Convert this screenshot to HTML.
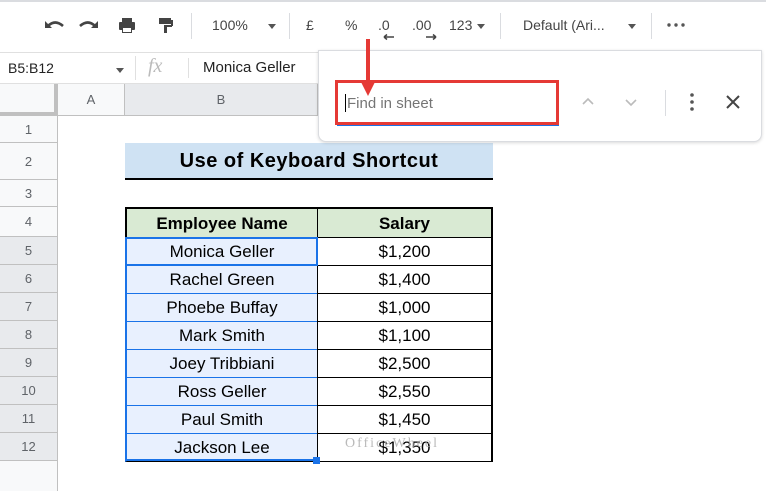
<html><head><style>
*{margin:0;padding:0;box-sizing:border-box}
body{width:766px;height:484px;overflow:hidden;background:#fff;font-family:"Liberation Sans",Arial,sans-serif;position:relative;color:#000}
.a{position:absolute}
.tb{color:#444;font-size:14px}
.rh{position:absolute;left:0;width:58px;background:#f8f9fa;border-bottom:1px solid #c0c0c0;border-right:1px solid #c0c0c0;color:#5f6368;font-size:13px;text-align:center}
.rh.s{background:#e8eaed}
.c{position:absolute;font-size:17px;text-align:center;border:1px solid #000}
</style></head><body>
<div class="a" style="left:0;top:0;width:766px;height:2px;background:#dadce0"></div>
<!-- toolbar -->
<svg class="a" style="top:14px;left:42px" width="160" height="22" viewBox="0 0 160 22">
<path d="M6 12 Q13 5 21 12" stroke="#444" stroke-width="2.6" fill="none"/><path d="M3 7 L3 14 L10 14Z" fill="#444"/>
<path d="M53 12 Q46 5 38 12" stroke="#444" stroke-width="2.6" fill="none"/><path d="M56 7 L56 14 L49 14Z" fill="#444"/>
<rect x="80" y="4" width="10" height="4" fill="#444"/><rect x="77" y="8" width="16" height="8" rx="1" fill="#444"/><rect x="80" y="13" width="10" height="6" fill="#444"/><rect x="81" y="14" width="8" height="4" fill="#fff"/>
<rect x="117" y="4" width="12" height="6" fill="#444"/><rect x="129" y="6" width="2" height="6" fill="#444"/><rect x="122" y="11" width="8" height="2" fill="#444"/><rect x="122" y="12" width="3" height="7" fill="#444"/>
</svg>
<div class="a" style="left:191px;top:13px;width:1px;height:26px;background:#dadce0"></div>
<div class="a tb" style="left:212px;top:17px">100%</div>
<div class="a" style="left:268px;top:24px;border:4px solid transparent;border-top:5px solid #555"></div>
<div class="a" style="left:289px;top:13px;width:1px;height:26px;background:#dadce0"></div>
<div class="a tb" style="left:306px;top:17px">£</div>
<div class="a tb" style="left:345px;top:17px">%</div>
<div class="a tb" style="left:378px;top:17px">.0</div>
<svg class="a" style="left:380px;top:33px" width="60" height="8"><path d="M4 4 H14 M4 4 L7 1.5 M4 4 L7 6.5" stroke="#444" stroke-width="1.5" fill="none"/><path d="M426 0" /><path d="M46 4 H56 M56 4 L53 1.5 M56 4 L53 6.5" stroke="#444" stroke-width="1.5" fill="none"/></svg>
<div class="a tb" style="left:412px;top:17px">.00</div>
<div class="a tb" style="left:449px;top:17px">123</div>
<div class="a" style="left:477px;top:24px;border:4px solid transparent;border-top:5px solid #555"></div>
<div class="a" style="left:500px;top:13px;width:1px;height:26px;background:#dadce0"></div>
<div class="a tb" style="left:523px;top:17px">Default (Ari...</div>
<div class="a" style="left:628px;top:24px;border:4px solid transparent;border-top:5px solid #555"></div>
<div class="a" style="left:651px;top:13px;width:1px;height:26px;background:#dadce0"></div>
<svg class="a" style="left:666px;top:22px" width="20" height="6"><circle cx="3" cy="3" r="1.7" fill="#555"/><circle cx="10" cy="3" r="1.7" fill="#555"/><circle cx="17" cy="3" r="1.7" fill="#555"/></svg>
<!-- formula bar -->
<div class="a" style="left:0;top:52px;width:318px;height:32px;border-top:1px solid #e0e0e0;border-bottom:1px solid #e0e0e0"></div>
<div class="a" style="left:8px;top:60px;font-size:14px;color:#222">B5:B12</div>
<div class="a" style="left:116px;top:68px;border:4px solid transparent;border-top:5px solid #555"></div>
<div class="a" style="left:135px;top:56px;width:1px;height:24px;background:#e0e0e0"></div>
<div class="a" style="left:148px;top:55px;font-size:20px;color:#bbb;font-style:italic;font-family:'Liberation Serif',serif">fx</div>
<div class="a" style="left:188px;top:58px;width:1px;height:20px;background:#e0e0e0"></div>
<div class="a" style="left:203px;top:59px;font-size:15px;color:#222">Monica Geller</div>
<!-- column headers -->
<div class="a" style="left:0;top:84px;width:58px;height:32px;background:#f8f9fa;border-right:4px solid #c0c0c0;border-bottom:4px solid #c0c0c0"></div>
<div class="a" style="left:58px;top:84px;width:67px;height:32px;background:#f8f9fa;border-right:1px solid #c0c0c0;border-bottom:1px solid #c0c0c0;font-size:13px;color:#5f6368;text-align:center;line-height:31px">A</div>
<div class="a" style="left:125px;top:84px;width:193px;height:32px;background:#e8eaed;border-right:1px solid #c0c0c0;border-bottom:1px solid #c0c0c0;font-size:13px;color:#5f6368;text-align:center;line-height:31px">B</div>
<!-- row headers -->
<div class="rh" style="top:116px;height:27px;line-height:27px">1</div>
<div class="rh" style="top:143px;height:37px;line-height:37px">2</div>
<div class="rh" style="top:180px;height:27px;line-height:27px">3</div>
<div class="rh" style="top:207px;height:30px;line-height:30px">4</div>
<div class="rh s" style="top:237px;height:28px;line-height:28px">5</div>
<div class="rh s" style="top:265px;height:28px;line-height:28px">6</div>
<div class="rh s" style="top:293px;height:28px;line-height:28px">7</div>
<div class="rh s" style="top:321px;height:28px;line-height:28px">8</div>
<div class="rh s" style="top:349px;height:28px;line-height:28px">9</div>
<div class="rh s" style="top:377px;height:28px;line-height:28px">10</div>
<div class="rh s" style="top:405px;height:28px;line-height:28px">11</div>
<div class="rh s" style="top:433px;height:28px;line-height:28px">12</div>
<div class="rh" style="top:461px;height:30px;border-bottom:none"></div>
<!-- title -->
<div class="a" style="left:125px;top:143px;width:368px;height:37px;background:#cfe2f3;border-bottom:2px solid #000;font-size:20px;font-weight:bold;text-align:center;line-height:37px;letter-spacing:.5px">Use of Keyboard Shortcut</div>
<!-- table -->
<div class="c" style="left:125px;top:207px;width:193px;height:31px;background:#d9ead3;font-weight:bold;line-height:29px;border-width:2px 1px 1px 2px">Employee Name</div>
<div class="c" style="left:317px;top:207px;width:176px;height:31px;background:#d9ead3;font-weight:bold;line-height:29px;border-width:2px 2px 1px 1px">Salary</div>
<div id="rows"></div>
<script>
var d=[["Monica Geller","$1,200"],["Rachel Green","$1,400"],["Phoebe Buffay","$1,000"],["Mark Smith","$1,100"],["Joey Tribbiani","$2,500"],["Ross Geller","$2,550"],["Paul Smith","$1,450"],["Jackson Lee","$1,350"]];
var h="";d.forEach(function(r,i){var t=237+i*28;
h+='<div class="c" style="left:125px;top:'+t+'px;width:193px;height:29px;background:#e8f0fe;line-height:28px;border-color:#1a73e8 #000 #000 #1a73e8;border-left-width:2px">'+r[0]+'</div>';
h+='<div class="c" style="left:317px;top:'+t+'px;width:176px;height:29px;background:#fff;line-height:28px;border-right-width:2px">'+r[1]+'</div>';});
document.getElementById("rows").innerHTML=h;
</script>
<div class="a" style="left:125px;top:237px;width:193px;height:29px;border:2px solid #1a73e8"></div>
<div class="a" style="left:125px;top:459px;width:192px;height:2px;background:#1a73e8"></div>
<div class="a" style="left:313px;top:457px;width:7px;height:7px;background:#1a73e8"></div>
<div class="a" style="left:345px;top:436px;font-size:14px;color:#aaa;letter-spacing:2px;font-family:'Liberation Serif',serif;opacity:.8">OfficeWheel</div>
<!-- find panel -->
<div class="a" style="left:318px;top:50px;width:444px;height:92px;background:#fff;border:1px solid #dadce0;border-radius:0 0 8px 8px;box-shadow:0 1px 3px rgba(0,0,0,.15)"></div>
<div class="a" style="left:337px;top:124px;width:222px;height:2px;background:#1a73e8"></div>
<div class="a" style="left:335px;top:80px;width:224px;height:45px;border:3px solid #e53935"></div>
<div class="a" style="left:345px;top:94px;width:1px;height:18px;background:#000"></div>
<div class="a" style="left:347px;top:95px;font-size:15px;color:#757575">Find in sheet</div>
<svg class="a" style="left:575px;top:90px" width="190" height="26">
<path d="M8 14 L13 9 L18 14" stroke="#bbb" stroke-width="1.6" fill="none"/>
<path d="M51 10 L56 15 L61 10" stroke="#bbb" stroke-width="1.6" fill="none"/>
<rect x="90" y="-3" width="1" height="30" fill="#dadce0"/>
<circle cx="117" cy="5" r="1.8" fill="#555"/><circle cx="117" cy="12" r="1.8" fill="#555"/><circle cx="117" cy="19" r="1.8" fill="#555"/>
<path d="M152 6 L164 18 M164 6 L152 18" stroke="#444" stroke-width="2"/>
</svg>
<!-- arrow -->
<div class="a" style="left:366px;top:39px;width:4px;height:46px;background:#e53935"></div>
<svg class="a" style="left:360px;top:80px" width="16" height="18"><path d="M0 0 L16 0 L8 16Z" fill="#e53935"/></svg>
</body></html>
